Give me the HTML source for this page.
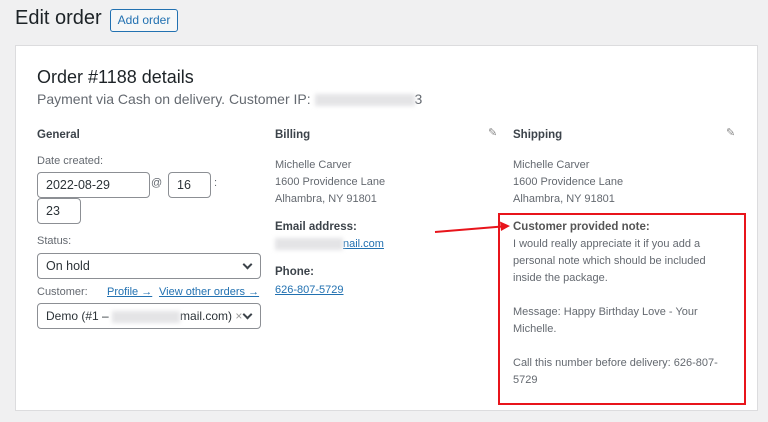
<!DOCTYPE html>
<html><head><style>
*{box-sizing:border-box;margin:0;padding:0}
body{width:768px;height:422px;background:#f0f0f1;font-family:"Liberation Sans",sans-serif;color:#646970;position:relative;overflow:hidden;font-size:11px}
.a{position:absolute;white-space:nowrap}
.panel{position:absolute;left:15px;top:45px;width:743px;height:366px;background:#fff;border:1px solid #dcdcde}
.h{font-weight:bold;color:#3c434a;font-size:11.5px}
.in{position:absolute;border:1px solid #8c8f94;border-radius:4px;background:#fff;color:#2c3338;font-size:12.5px;padding-left:8px;line-height:24px}
a,.l{color:#2271b1;text-decoration:underline}
.t{line-height:17px}
.chev{position:absolute;right:9px;width:7px;height:7px;border-right:2px solid #3c434a;border-bottom:2px solid #3c434a;transform:rotate(45deg);top:7px}
.blur{display:inline-block;background:#e4e4e6;filter:blur(2px);height:12px;vertical-align:middle}
</style></head><body>
<div class="a" style="left:15px;top:7px;font-size:20px;color:#1d2327">Edit order</div>
<div class="a" style="left:110px;top:9px;width:68px;height:23px;border:1px solid #2271b1;border-radius:3px;color:#2271b1;font-size:12px;text-align:center;line-height:21px;background:#f6f7f7">Add order</div>
<div class="panel"></div>
<div class="a" style="left:37px;top:67px;font-size:18px;color:#1d2327">Order #1188 details</div>
<div class="a" style="left:37px;top:91px;font-size:14px;color:#646970">Payment via Cash on delivery. Customer IP: <span class="blur" style="width:100px"></span>3</div>

<div class="a h" style="left:37px;top:129px">General</div>
<div class="a" style="left:37px;top:155px">Date created:</div>
<div class="in" style="left:37px;top:172px;width:113px;height:26px">2022-08-29</div>
<div class="a" style="left:151px;top:177px">@</div>
<div class="in" style="left:168px;top:172px;width:43px;height:26px">16</div>
<div class="a" style="left:214px;top:177px">:</div>
<div class="in" style="left:37px;top:198px;width:44px;height:26px">23</div>
<div class="a" style="left:37px;top:235px">Status:</div>
<div class="in" style="left:37px;top:253px;width:224px;height:26px">On hold<span class="chev"></span></div>
<div class="a" style="left:37px;top:286px">Customer:</div>
<div class="a l" style="left:107px;top:286px">Profile →</div>
<div class="a l" style="left:159px;top:286px">View other orders →</div>
<div class="in" style="left:37px;top:303px;width:224px;height:26px;font-size:12px">Demo (#1 – <span class="blur" style="width:68px"></span>mail.com) <span style="color:#999">×</span><span class="chev"></span></div>

<div class="a h" style="left:275px;top:129px">Billing</div>
<div class="a" style="left:488px;top:126px;color:#888">✎</div>
<div class="a t" style="left:275px;top:157px">Michelle Carver<br>1600 Providence Lane<br>Alhambra, NY 91801</div>
<div class="a h" style="left:275px;top:221px">Email address:</div>
<div class="a l" style="left:275px;top:238px"><span class="blur" style="width:68px"></span>nail.com</div>
<div class="a h" style="left:275px;top:266px">Phone:</div>
<div class="a l" style="left:275px;top:284px">626-807-5729</div>

<div class="a h" style="left:513px;top:129px">Shipping</div>
<div class="a" style="left:726px;top:126px;color:#888">✎</div>
<div class="a t" style="left:513px;top:157px">Michelle Carver<br>1600 Providence Lane<br>Alhambra, NY 91801</div>
<div class="a t" style="left:513px;top:219px"><b style="color:#555;font-size:11.5px">Customer provided note:</b><br>I would really appreciate it if you add a<br>personal note which should be included<br>inside the package.<br><br>Message: Happy Birthday Love - Your<br>Michelle.<br><br>Call this number before delivery: 626-807-<br>5729</div>
<div class="a" style="left:498px;top:213px;width:248px;height:192px;border:2px solid #e8141b"></div>
<svg class="a" style="left:430px;top:220px" width="80" height="20"><line x1="5" y1="12" x2="72" y2="6.5" stroke="#e8141b" stroke-width="2"/><polygon points="80,6 70,1.5 71,11" fill="#e8141b"/></svg>
</body></html>
